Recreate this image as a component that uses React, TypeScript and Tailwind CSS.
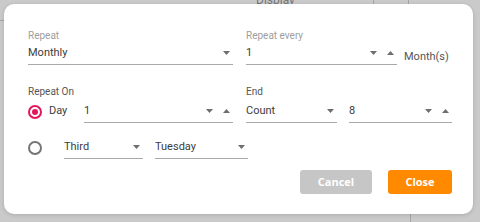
import React from 'react'

const font = { fontFamily: 'Roboto, "Liberation Sans", sans-serif' }

const Tri = ({ up }: { up?: boolean }) => (
  <svg width="7" height="4" viewBox="0 0 7 4" className="block">
    <polygon points={up ? '0,4 7,4 3.5,0' : '0,0 7,0 3.5,4'} fill="#6e6e6e" />
  </svg>
)

const Box = ({ value, w, spin }: { value: string; w: string; spin?: boolean }) => (
  <div className={`${w} h-[23px] flex items-center border-b border-[#a9a9a9] pr-[3px]`}>
    <span className="flex-1 text-[11px] leading-[14px] text-[#3c3c3c]">{value}</span>
    {spin ? (
      <div className="flex items-center gap-[10px]">
        <Tri />
        <Tri up />
      </div>
    ) : (
      <Tri />
    )}
  </div>
)

const Radio = ({ on }: { on?: boolean }) => (
  <div
    className={`w-[14px] h-[14px] rounded-full border-2 flex items-center justify-center ${
      on ? 'border-[#e3165b]' : 'border-[#757575]'
    }`}
  >
    {on && <div className="w-[6px] h-[6px] rounded-full bg-[#e3165b]" />}
  </div>
)

export default function App() {
  return (
    <div className="relative w-[480px] h-[222px] overflow-hidden bg-[#cacaca]" style={font}>
      {/* page behind the overlay */}
      <div className="absolute left-[256px] top-[-7px] text-[12px] leading-[14px] text-[#777]">Display</div>
      <div className="absolute left-[373px] top-0 w-px h-[5px] bg-[#a5a5a5]" />
      <div className="absolute left-[408px] top-0 w-px h-[5px] bg-[#a5a5a5]" />
      <div className="absolute left-0 top-[20px] w-[4px] h-px bg-[#a5a5a5]" />
      <div className="absolute left-[410px] top-[214px] w-px h-[8px] bg-[#a5a5a5]" />

      <div className="relative ml-[4px] mt-[4px] w-[469px] h-[210px] rounded-[10px] bg-white shadow-[0_1px_4px_rgba(0,0,0,0.15)] pl-[24px] pr-[21px] pt-[26px] flex flex-col">
        <div className="flex gap-[13px]">
          <div>
            <div className="h-[12px] text-[10px] leading-[12px] text-[#9e9e9e]">Repeat</div>
            <Box value="Monthly" w="w-[205px]" />
          </div>
          <div className="flex items-end">
            <div>
              <div className="h-[12px] text-[10px] leading-[12px] text-[#9e9e9e]">Repeat every</div>
              <Box value="1" w="w-[151px]" spin />
            </div>
            <span className="ml-[7px] mb-[1px] text-[11px] leading-[14px] text-[#555]">Month(s)</span>
          </div>
        </div>

        <div className="mt-[21px] flex gap-[13px] text-[10px] leading-[12px] text-[#555]">
          <span className="w-[205px]">Repeat On</span>
          <span>End</span>
        </div>

        <div className="mt-[2px] flex gap-[13px]">
          <div className="flex items-center">
            <Radio on />
            <span className="ml-[7px] w-[35px] text-[11px] text-[#3c3c3c] pb-px">Day</span>
            <Box value="1" w="w-[149px]" spin />
          </div>
          <div className="flex gap-[12px]">
            <Box value="Count" w="w-[91px]" />
            <Box value="8" w="w-[103px]" spin />
          </div>
        </div>

        <div className="mt-[13px] flex items-center">
          <Radio />
          <div className="ml-[22px] flex gap-[12px]">
            <Box value="Third" w="w-[79px]" />
            <Box value="Tuesday" w="w-[93px]" />
          </div>
        </div>

        <div className="mt-[11px] flex justify-end gap-[16px]" style={{ fontFamily: '"Open Sans", sans-serif' }}>
          <button className="w-[72px] h-[24px] rounded-[3px] bg-[#c6c6c6] text-white text-[11px] font-bold">
            Cancel
          </button>
          <button className="w-[64px] h-[24px] rounded-[3px] bg-[#ff8a00] text-white text-[11px] font-bold">
            Close
          </button>
        </div>
      </div>
    </div>
  )
}
